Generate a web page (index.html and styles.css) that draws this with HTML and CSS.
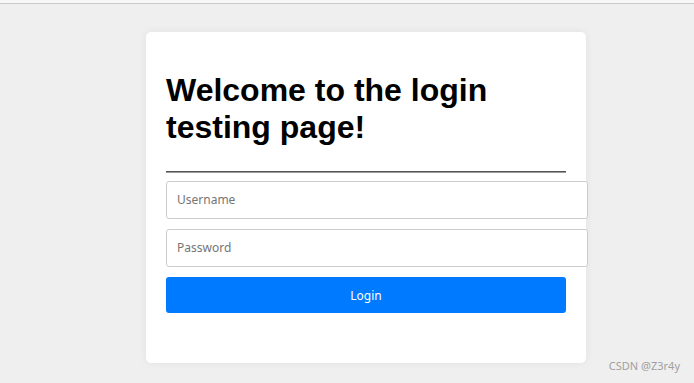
FILE: index.html
```html
<!DOCTYPE html>
<html lang="en">
<head>
    <meta charset="UTF-8">
    <meta name="viewport" content="width=device-width, initial-scale=1.0">
    <title>Login Test</title>
    <link rel="stylesheet" href="styles.css">
</head>
<body>
    <div class="top-bar"></div>

    <div class="container">
        <h1>Welcome to the login testing page!</h1>
        <hr>
        <form action="/login" method="post">
            <input type="text" name="username" placeholder="Username">
            <input type="password" name="password" placeholder="Password">
            <button type="submit">Login</button>
        </form>
    </div>

    <div class="watermark">CSDN @Z3r4y</div>
</body>
</html>
```

FILE: styles.css
```css
body {
    margin: 0;
    background-color: #efefef;
    font-family: 'Noto Sans', 'Open Sans', sans-serif;
    min-height: 383px;
    position: relative;
}

.top-bar {
    height: 3px;
    background-color: #f7f7f7;
    border-bottom: 1px solid #c8c8cc;
}

.container {
    width: 400px;
    margin: 28px 0 0 146px;
    padding: 20px 20px 50px 20px;
    background-color: white;
    border-radius: 5px;
    box-shadow: 0 0 8px rgba(0, 0, 0, 0.06);
}

h1 {
    font-family: 'Liberation Sans', Arial, sans-serif;
    font-size: 32px;
    font-weight: bold;
    line-height: 37px;
    margin: 20px 0 25px 0;
    color: #000;
}

hr {
    margin: 0 0 8px 0;
    border: none;
    border-top: 1px solid #555;
    border-bottom: 1px solid #999;
    height: 0;
}

form {
    display: flex;
    flex-direction: column;
    align-items: flex-start;
}

input {
    width: 100%;
    padding: 10px;
    margin-bottom: 10px;
    border: 1px solid #ccc;
    border-radius: 3px;
    font-family: inherit;
    font-size: 12px;
    line-height: 16px;
    color: #333;
    background-color: white;
}

input::placeholder {
    color: #757575;
}

button {
    width: 100%;
    height: 36px;
    background-color: #007bff;
    color: white;
    border: none;
    border-radius: 3px;
    font-family: inherit;
    font-size: 12px;
    cursor: pointer;
}

.watermark {
    position: absolute;
    right: 14px;
    bottom: 10px;
    font-size: 11px;
    color: #a0a0a0;
}
```
